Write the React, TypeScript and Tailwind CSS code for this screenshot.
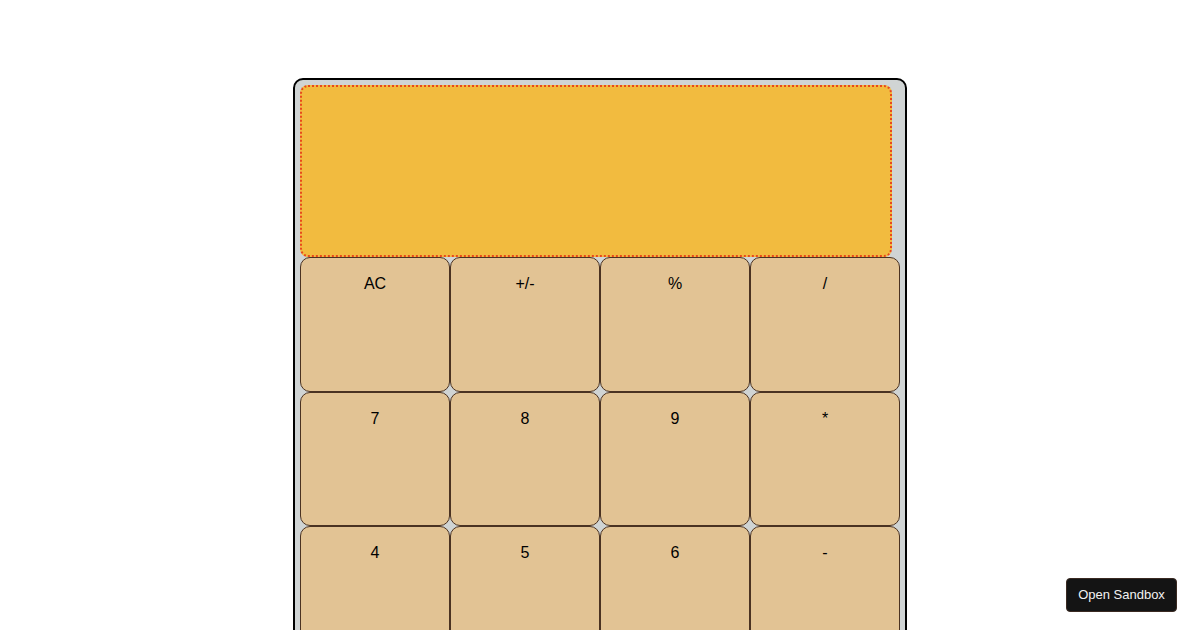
const keys = ["AC", "+/-", "%", "/", "7", "8", "9", "*", "4", "5", "6", "-", "1", "2", "3", "+", "0", ".", "=", ""];

export default function App() {
  return (
    <div className="min-h-screen bg-white font-['Liberation_Sans',Arial,sans-serif] text-black">
      <div className="flex justify-center pt-[78px]">
        <div className="w-[614px] rounded-[10px] border-2 border-black bg-[#d0d4d4] p-[5px]">
          <div className="h-[172px] w-[592px] rounded-[8px] border-2 border-dotted border-[#e8481c] bg-[#f2bb3f]" />
          <div className="grid grid-cols-4">
            {keys.map((k, i) => (
              <button
                key={i}
                className="flex h-[134.5px] items-start justify-center rounded-[10px] border border-[#4a3222] bg-[#e2c394] pt-[17px] text-base leading-[18px]"
              >
                {k}
              </button>
            ))}
          </div>
        </div>
      </div>
      <button className="fixed bottom-[18px] right-[23px] h-[34px] w-[111px] rounded-[4px] border border-[#3a2a22] bg-[#141414] text-[13px] text-[#f2f2f2]">
        Open Sandbox
      </button>
    </div>
  );
}
